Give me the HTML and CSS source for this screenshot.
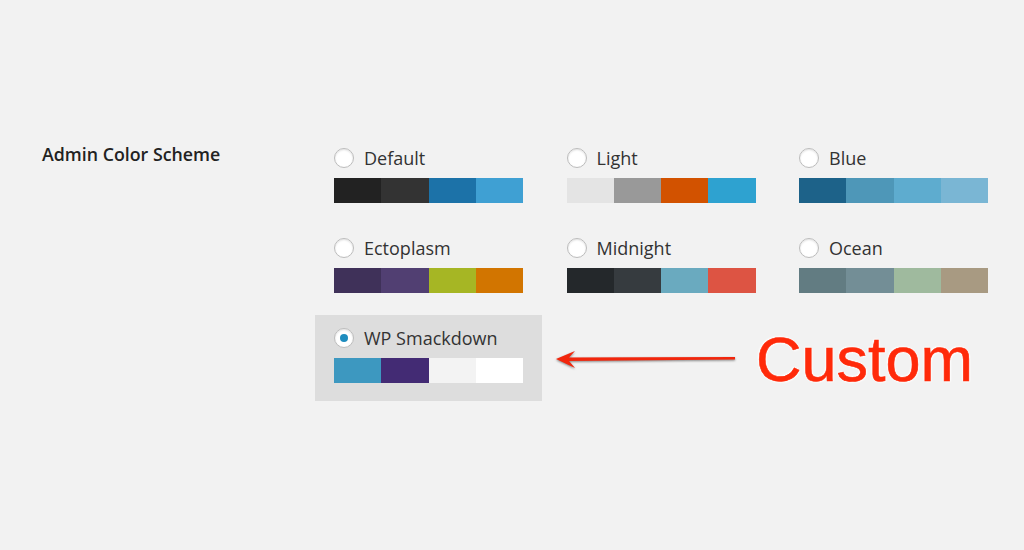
FILE: index.html
```html
<!DOCTYPE html>
<html>
<head>
<meta charset="utf-8">
<link rel="stylesheet" href="styles.css">
</head>
<body>
<div class="page">
  <div class="field">
    <div class="th">Admin Color Scheme</div>
    <div class="options">
      <div class="opt">
        <label class="head"><span class="radio"></span><span>Default</span></label>
        <div class="pal"><i style="background:#222222"></i><i style="background:#333333"></i><i style="background:#1c72a8"></i><i style="background:#3fa0d3"></i></div>
      </div>
      <div class="opt">
        <label class="head"><span class="radio"></span><span>Light</span></label>
        <div class="pal"><i style="background:#e4e4e4"></i><i style="background:#999999"></i><i style="background:#d25200"></i><i style="background:#2ea2d0"></i></div>
      </div>
      <div class="opt">
        <label class="head"><span class="radio"></span><span>Blue</span></label>
        <div class="pal"><i style="background:#1d6289"></i><i style="background:#4e97b8"></i><i style="background:#5eaccf"></i><i style="background:#7ab6d4"></i></div>
      </div>
      <div class="opt">
        <label class="head"><span class="radio"></span><span>Ectoplasm</span></label>
        <div class="pal"><i style="background:#3f3159"></i><i style="background:#513f72"></i><i style="background:#a6b624"></i><i style="background:#d27500"></i></div>
      </div>
      <div class="opt">
        <label class="head"><span class="radio"></span><span>Midnight</span></label>
        <div class="pal"><i style="background:#24282b"></i><i style="background:#363b3f"></i><i style="background:#6aaabf"></i><i style="background:#dd5443"></i></div>
      </div>
      <div class="opt">
        <label class="head"><span class="radio"></span><span>Ocean</span></label>
        <div class="pal"><i style="background:#627c82"></i><i style="background:#738e96"></i><i style="background:#9fba9e"></i><i style="background:#a89a82"></i></div>
      </div>
      <div class="opt selected">
        <label class="head"><span class="radio checked"></span><span>WP Smackdown</span></label>
        <div class="pal"><i style="background:#3d98c0"></i><i style="background:#432b74"></i><i style="background:#f3f3f3"></i><i style="background:#ffffff"></i></div>
      </div>
    </div>
  </div>
  <svg class="arrow" width="200" height="30" viewBox="550 345 200 30">
    <path d="M556 359 L575 351 L569 357.5 L735 357 L735 359.5 L569 361 L575 368 Z" fill="#f2260c"/>
  </svg>
  <div class="custom">Custom</div>
</div>
</body>
</html>
```

FILE: styles.css
```css
html, body {
  margin: 0;
  padding: 0;
  background: #f2f2f2;
}
.page {
  position: relative;
  width: 1024px;
  height: 550px;
  font-family: "Open Sans", "Liberation Sans", sans-serif;
  color: #333;
}
.field {
  display: flex;
  padding: 135px 0 0 42px;
}
.th {
  width: 273px;
  margin-top: 7px;
  font-size: 17.8px;
  line-height: 24px;
  font-weight: 600;
  color: #222;
}
.options {
  display: grid;
  grid-template-columns: repeat(3, 227px);
  column-gap: 5.5px;
  row-gap: 4px;
}
.opt {
  padding: 11px 19px 18px;
}
.opt.selected {
  background: #dddddd;
}
.head {
  display: flex;
  align-items: center;
  height: 24px;
  font-size: 18px;
  line-height: 24px;
  color: #333;
}
.radio {
  box-sizing: border-box;
  width: 20px;
  height: 20px;
  border-radius: 50%;
  border: 1px solid #bcbcbc;
  background: #fff;
  box-shadow: inset 0 1px 2px rgba(0,0,0,0.12);
  margin-right: 10px;
  position: relative;
}
.radio.checked::after {
  content: "";
  position: absolute;
  left: 5px;
  top: 5px;
  width: 8px;
  height: 8px;
  border-radius: 50%;
  background: #1e8cbe;
}
.pal {
  display: flex;
  margin-top: 8px;
  height: 25px;
  width: 189px;
}
.pal i {
  flex: 1;
}
.arrow {
  position: absolute;
  left: 550px;
  top: 345px;
  filter: drop-shadow(0 1.5px 1px rgba(40,40,40,0.55));
}
.custom {
  position: absolute;
  left: 756px;
  top: 328px;
  font-family: "Liberation Sans", Arial, sans-serif;
  font-size: 63px;
  line-height: 63px;
  color: #ff2a0a;
  -webkit-text-stroke: 0.6px #ff2a0a;
  text-shadow: 0 0 2px #fff, 0 0 3px #fff, 1px 1px 2px #fff, -1px -1px 2px #fff;
}
```
